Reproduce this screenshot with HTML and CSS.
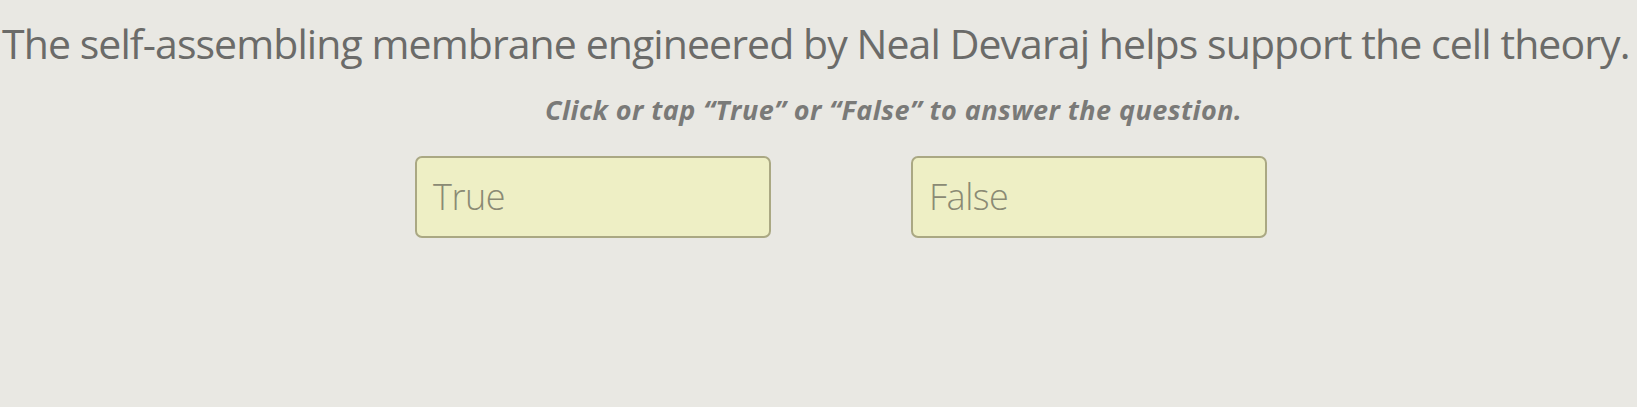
FILE: index.html
```html
<!DOCTYPE html>
<html lang="en">
<head>
    <meta charset="UTF-8">
    <meta name="viewport" content="width=device-width, initial-scale=1.0">
    <title>True or False</title>
    <link rel="stylesheet" href="styles.css">
</head>
<body>
    <div class="question">
        <h1 class="prompt">The self-assembling membrane engineered by Neal Devaraj helps support the cell theory.</h1>
        <p class="hint">Click or tap &ldquo;True&rdquo; or &ldquo;False&rdquo; to answer the question.</p>
        <div class="choices">
            <button class="choice">True</button>
            <button class="choice">False</button>
        </div>
    </div>
</body>
</html>
```

FILE: styles.css
```css
body {
    margin: 0;
    padding: 0;
    background-color: #e9e8e3;
    font-family: "Open Sans", Arial, sans-serif;
    overflow: hidden;
}
.question {
    padding: 17px 0 0 2px;
}
.prompt {
    margin: 0;
    font-size: 41px;
    font-weight: 400;
    color: #6b6b69;
    white-space: nowrap;
    letter-spacing: -0.92px;
    line-height: 52px;
}
.hint {
    margin: 23px 0 0 543px;
    font-size: 27px;
    font-weight: 700;
    font-style: italic;
    color: #7a7a78;
    letter-spacing: 0.45px;
    line-height: 36px;
}
.choices {
    display: flex;
    gap: 140px;
    margin: 28px 0 0 413px;
}
.choice {
    width: 356px;
    height: 82px;
    padding: 0 0 2px 16px;
    text-align: left;
    background-color: #eeefc5;
    border: 2px solid #aaa883;
    border-radius: 7px;
    font-family: "Open Sans", Arial, sans-serif;
    font-size: 36px;
    font-weight: 300;
    color: #8a8a74;
    letter-spacing: -0.5px;
}
```
